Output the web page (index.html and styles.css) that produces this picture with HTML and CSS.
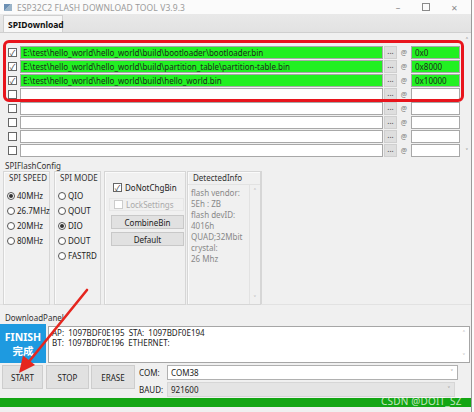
FILE: index.html
```html
<!DOCTYPE html>
<html>
<head>
<meta charset="utf-8">
<link rel="stylesheet" href="styles.css">
</head>
<body>
<div class="win">
  <div class="titlebar">
    <span class="appicon"></span>
    <span class="title">ESP32C2 FLASH DOWNLOAD TOOL V3.9.3</span>
    <span class="ctl min">–</span>
    <span class="ctl max"></span>
    <span class="ctl close">✕</span>
  </div>
  <div class="tabbar"><div class="tab">SPIDownload</div></div>
  <div class="files">
    <div class="rows">
      <div class="row"><span class="cb on">✓</span><span class="path green">E:\test\hello_world\hello_world\build\bootloader\bootloader.bin</span><span class="dots">...</span><span class="at">@</span><span class="addr green">0x0</span></div>
      <div class="row"><span class="cb on">✓</span><span class="path green">E:\test\hello_world\hello_world\build\partition_table\partition-table.bin</span><span class="dots">...</span><span class="at">@</span><span class="addr green">0x8000</span></div>
      <div class="row"><span class="cb on">✓</span><span class="path green">E:\test\hello_world\hello_world\build\hello_world.bin</span><span class="dots">...</span><span class="at">@</span><span class="addr green">0x10000</span></div>
      <div class="row"><span class="cb"></span><span class="path"></span><span class="dots">...</span><span class="at">@</span><span class="addr"></span></div>
      <div class="row"><span class="cb"></span><span class="path"></span><span class="dots">...</span><span class="at">@</span><span class="addr"></span></div>
      <div class="row"><span class="cb"></span><span class="path"></span><span class="dots">...</span><span class="at">@</span><span class="addr"></span></div>
      <div class="row"><span class="cb"></span><span class="path"></span><span class="dots">...</span><span class="at">@</span><span class="addr"></span></div>
      <div class="row"><span class="cb"></span><span class="path"></span><span class="dots">...</span><span class="at">@</span><span class="addr"></span></div>
    </div>
    <div class="vscroll"><span>˄</span><span>˅</span></div>
  </div>
  <div class="label">SPIFlashConfig</div>
  <div class="cfg">
    <div class="grp speed">
      <div class="gtitle">SPI SPEED</div>
      <div class="radios">
        <div class="radio"><span class="rd on"></span>40MHz</div>
        <div class="radio"><span class="rd"></span>26.7MHz</div>
        <div class="radio"><span class="rd"></span>20MHz</div>
        <div class="radio"><span class="rd"></span>80MHz</div>
      </div>
    </div>
    <div class="grp mode">
      <div class="gtitle">SPI MODE</div>
      <div class="radios">
        <div class="radio"><span class="rd"></span>QIO</div>
        <div class="radio"><span class="rd"></span>QOUT</div>
        <div class="radio"><span class="rd on"></span>DIO</div>
        <div class="radio"><span class="rd"></span>DOUT</div>
        <div class="radio"><span class="rd"></span>FASTRD</div>
      </div>
    </div>
    <div class="grp opts">
      <div class="chk"><span class="cb on">✓</span>DoNotChgBin</div>
      <div class="chk dis"><span class="cb"></span>LockSettings</div>
      <div class="btn">CombineBin</div>
      <div class="btn">Default</div>
    </div>
    <div class="grp detected">
      <div class="gtitle">DetectedInfo</div>
      <div class="dbox">
        <div class="dtext">flash vendor:<br>5Eh : ZB<br>flash devID:<br>4016h<br>QUAD;32Mbit<br>crystal:<br>26 Mhz</div>
        <div class="dscroll"><span>˄</span><span>˅</span></div>
      </div>
    </div>
    <div class="blank"></div>
  </div>
  <div class="label dl-label">DownloadPanel</div>
  <div class="dl">
    <div class="finish"><span>FINISH</span><span>完成</span></div>
    <div class="log">
      <div class="logtext">AP:&nbsp; 1097BDF0E195&nbsp; STA:&nbsp; 1097BDF0E194<br>BT:&nbsp; 1097BDF0E196&nbsp; ETHERNET:</div>
      <div class="lscroll"><span>˄</span><span>˅</span></div>
    </div>
  </div>
  <div class="ctrl">
    <div class="cbtn start">START</div>
    <div class="cbtn stop">STOP</div>
    <div class="cbtn erase">ERASE</div>
    <div class="ports">
      <div class="port"><span class="plabel">COM:</span><span class="combo white">COM38<i>˅</i></span></div>
      <div class="port"><span class="plabel">BAUD:</span><span class="combo grey">921600<i>˅</i></span></div>
    </div>
  </div>
  <div class="progress"></div>
</div>
<div class="redbox"></div>
<svg class="arrow" width="474" height="412" viewBox="0 0 474 412">
  <line x1="87" y1="290" x2="27" y2="364" stroke="#e5261f" stroke-width="2.6" stroke-linecap="round"/>
  <polygon points="19,373 23,355.5 35,365" fill="#e5261f"/>
</svg>
<div class="watermark">CSDN @DOIT_SZ</div>
</body>
</html>
```

FILE: styles.css
```css
* { box-sizing: border-box; }
html, body { margin: 0; padding: 0; }
body {
  width: 474px; height: 412px; overflow: hidden; position: relative;
  background: #fbfbfb;
  font-family: "Noto Sans", "Noto Sans CJK SC", sans-serif;
  font-size: 8px; color: #222;
}
.win {
  width: 472px; height: 412px; background: #f0f0f0;
  border-right: 1px solid #9a9a9a;
  display: flex; flex-direction: column;
}
.titlebar {
  height: 14px; background: #fbfbfb; display: flex; align-items: center;
  color: #9a9a9a; font-size: 8.5px; position: relative;
}
.appicon {
  width: 8px; height: 7px; margin: 0 5px 0 4px;
  background: linear-gradient(135deg, #6b8fb3 0 45%, #9bb4c9 45% 100%);
}
.title { letter-spacing: 0.1px; flex: 1; }
.ctl { width: 28px; text-align: center; color: #8a8a8a; font-size: 9px; }
.max { display: flex; justify-content: center; }
.max::before { content: ""; width: 6px; height: 6px; border: 1px solid #8a8a8a; }
.close { font-size: 8px; margin-right: 3px; }
.tabbar {
  height: 19px; background: linear-gradient(#e9e9e9, #e2e2e2);
  border-bottom: 1px solid #cfcfcf; display: flex; align-items: flex-end; padding-left: 3px;
}
.tab {
  height: 17px; width: 60px; background: #f7f7f7; border: 1px solid #cfcfcf; border-bottom: none;
  font-weight: bold; font-size: 8.5px; color: #111; display: flex; align-items: center; padding-left: 4px;
}
.files { height: 127px; display: flex; }
.rows { width: 464px; padding-top: 13px; display: flex; flex-direction: column; gap: 1px; }
.row { height: 13px; display: flex; align-items: center; }
.cb {
  width: 9px; height: 9px; border: 1px solid #666; background: #fff;
  display: inline-flex; align-items: center; justify-content: center;
  font-size: 8px; line-height: 1; color: #333; flex: none;
}
.row .cb { margin: 0 3px 0 8px; }
.path, .addr {
  height: 13px; border: 1px solid #a8a8a8; background: #fff;
  line-height: 11px; padding-left: 2px; white-space: nowrap; overflow: hidden; color: #1b2b1b;
}
.path { width: 363px; }
.addr { width: 49px; padding-left: 3px; }
.green { background: #22f022; }
.dots {
  width: 13px; height: 13px; margin-left: 1px; background: #dedede; border: 1px solid #cfcfcf;
  font-size: 8px; line-height: 8px; text-align: center; color: #444;
}
.at { width: 14px; text-align: center; font-size: 7px; color: #777; }
.vscroll {
  width: 8px; display: flex; flex-direction: column; justify-content: space-between;
  padding: 4px 0 4px; color: #777; font-size: 8px; line-height: 8px; align-items: center;
}
.label { height: 11px; line-height: 11px; padding-left: 5px; color: #333; }
.cfg { height: 134px; display: flex; border-bottom: 1px solid #e2e2e2; }
.grp {
  border: 1px solid #d6d6d6; box-shadow: inset 1px 1px 0 #fafafa;
  height: 134px;
}
.gtitle { height: 12px; line-height: 12px; padding-left: 5px; color: #333; white-space: nowrap; }
.speed { width: 47px; margin-left: 3px; }
.mode { width: 47px; margin-left: 4px; }
.radios { margin-top: 4px; padding-left: 3px; }
.radio { height: 15px; display: flex; align-items: center; gap: 2px; color: #222; white-space: nowrap; }
.rd {
  width: 8px; height: 8px; border-radius: 50%; border: 1px solid #555; background: #fff;
  display: inline-flex; align-items: center; justify-content: center; flex: none;
}
.rd.on::before { content: ""; width: 4px; height: 4px; border-radius: 50%; background: #333; }
.opts {
  width: 82px; margin-left: 3px; padding: 9px 1px 0 7px;
  display: flex; flex-direction: column;
}
.chk { height: 13px; display: flex; align-items: center; gap: 3px; color: #222; }
.chk .cb { margin-left: 1px; }
.chk.dis { color: #aaa; margin-top: 4px; border: 1px solid #e6e6e6; margin-left: -3px; padding-left: 3px; }
.chk.dis .cb { border-color: #ccc; }
.btn {
  height: 14px; margin-top: 3px; margin-left: -1px; background: #e1e1e1; border: 1px solid #c8c8c8;
  display: flex; align-items: center; justify-content: center; color: #222;
}
.chk.dis + .btn { margin-top: 4px; }
.detected { width: 74px; margin-left: 1px; display: flex; flex-direction: column; }
.dbox { flex: 1; display: flex; border-top: 1px solid #e2e2e2; }
.dtext { flex: 1; padding: 2px 0 0 3px; line-height: 11px; color: #888; white-space: nowrap; overflow: hidden; }
.dscroll {
  width: 11px; border-left: 1px solid #e2e2e2; display: flex; flex-direction: column;
  justify-content: space-between; align-items: center; color: #aaa; line-height: 8px; padding: 3px 0 1px;
}
.blank { flex: 1; border-left: 1px solid #d6d6d6; }
.dl-label { margin-top: 7px; }
.dl { height: 40px; display: flex; margin-top: 1px; }
.finish {
  width: 46px; height: 39px; background: #1e9ae0; color: #fff; font-weight: bold;
  display: flex; flex-direction: column; align-items: center; justify-content: center;
  font-size: 10.5px; line-height: 14px;
}
.log {
  width: 422px; margin-left: 2px; margin-top: 2px; height: 37px; background: #fff;
  border: 1px solid #a6a6a6; display: flex;
}
.logtext { flex: 1; padding: 1px 0 0 3px; line-height: 10px; color: #222; }
.lscroll {
  width: 10px; display: flex; flex-direction: column; justify-content: space-between;
  align-items: center; color: #aaa; line-height: 8px; padding: 3px 0 1px;
}
.ctrl { height: 33px; display: flex; margin-top: 1px; }
.cbtn {
  height: 24px; background: #e1e1e1; border: 1px solid #cdcdcd;
  display: flex; align-items: center; justify-content: center; color: #222;
}
.start { width: 41px; margin-left: 2px; }
.stop { width: 43px; margin-left: 3px; }
.erase { width: 44px; margin-left: 2px; }
.ports { flex: 1; margin-left: 4px; display: flex; flex-direction: column; gap: 2px; }
.port { height: 15px; display: flex; align-items: center; }
.plabel { width: 28px; color: #222; }
.combo {
  height: 15px; border: 1px solid #b0b0b0; display: flex; align-items: center;
  padding-left: 3px; position: relative; color: #222;
}
.combo i { position: absolute; right: 4px; font-style: normal; color: #888; }
.white { width: 291px; background: #fff; }
.grey { width: 288px; background: #e4e4e4; border-color: #d6d6d6; }
.progress { height: 9px; background: #14a614; }
.redbox {
  position: absolute; left: 3px; top: 40px; width: 461px; height: 62px;
  border: 3px solid #e8141c; border-radius: 6px;
}
.arrow { position: absolute; left: 0; top: 0; }
.watermark {
  position: absolute; left: 381px; top: 394px; font-size: 10px; color: rgba(255,255,255,0.75);
  letter-spacing: 0.2px;
}
```
